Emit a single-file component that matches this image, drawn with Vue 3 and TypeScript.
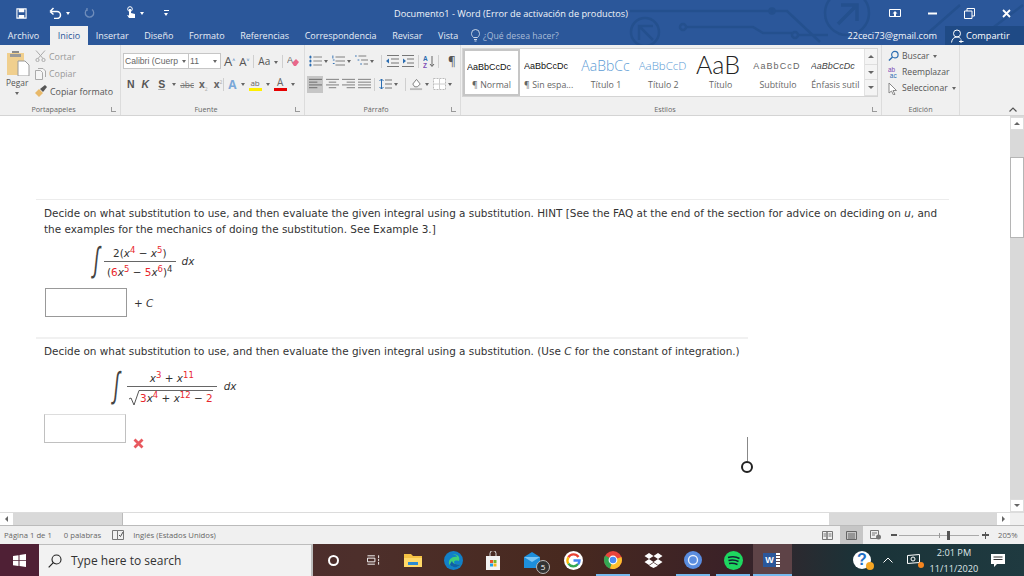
<script setup lang="ts">
const tabs = ["Insertar", "Diseño", "Formato", "Referencias", "Correspondencia", "Revisar", "Vista"];

const styles = [
  { name: "¶ Sin espa...", sample: "AaBbCcDc", cls: "s-nospace" },
  { name: "Título 1", sample: "AaBbCc", cls: "s-h1" },
  { name: "Título 2", sample: "AaBbCcD", cls: "s-h2" },
  { name: "Título", sample: "AaB", cls: "s-title" },
  { name: "Subtítulo", sample: "AaBbCcD", cls: "s-sub" },
  { name: "Énfasis sutil", sample: "AaBbCcDc", cls: "s-emph" },
];
</script>

<template>
  <div class="word">
    <!-- title bar -->
    <header class="titlebar">
      <svg class="circuit" width="404" height="45" viewBox="0 0 404 45">
        <g fill="none" stroke="#24508e" stroke-width="2.500">
          <circle cx="25" cy="32" r="14" />
          <path d="M19 40V26h14M19 26l14 14" />
          <circle cx="227" cy="13" r="22" />
          <path d="M218 24l18-18M221 5h16v16" stroke-width="3.500" />
          <path d="M10 11h157l33 31M66 27h67l10 6h29M178 35h30M300 40l40-35M350 45L403 5" />
          <circle cx="152" cy="11" r="2.500" />
          <circle cx="63" cy="27" r="3" />
          <circle cx="175" cy="35" r="3" />
        </g>
      </svg>
      <div class="qat">
        <svg class="q-save" width="11" height="11" viewBox="0 0 12 12"><path d="M1 1h10v10H1z" fill="none" stroke="#fff" stroke-width="1.200" /><path d="M3 1h6v3.500H3zM3 7.500h6V11H3z" fill="#fff" /></svg>
        <svg class="q-undo" width="13" height="12" viewBox="0 0 13 12"><path d="M1 4.500h7a3.500 3.500 0 0 1 0 7H5M1 4.500l3.500-3.500M1 4.500l3.500 3" fill="none" stroke="#fff" stroke-width="1.500" /></svg>
        <span class="caret"></span>
        <svg class="q-redo" width="11" height="12" viewBox="0 0 11 12"><path d="M3 2.500a4.200 4.200 0 1 0 5 0M3 1v3" fill="none" stroke="#6f8dbb" stroke-width="1.300" /></svg>
        <svg class="q-touch" width="10" height="14" viewBox="0 0 10 14"><circle cx="4" cy="3" r="2.300" fill="none" stroke="#fff" /><path d="M3 3h2v4l4 1v4H3L1 9l2 .5z" fill="#fff" /></svg>
        <span class="caret"></span>
        <span class="q-more"></span>
      </div>
      <div class="doc-title">Documento1 - Word (Error de activación de productos)</div>
      <div class="window-btns">
        <svg width="12" height="9" viewBox="0 0 12 9"><path d="M.5.500h11v7H.500z" fill="none" stroke="#fff" /><path d="M6 2l2.500 2.500h-1.500V7H5V4.500H3.500z" fill="#fff" /></svg>
        <svg width="9" height="3" viewBox="0 0 9 3"><path d="M0 1.500h9" stroke="#fff" stroke-width="2" /></svg>
        <svg width="11" height="11" viewBox="0 0 11 11"><path d="M.5 3h7.500v7.500H.5zM3 3V.5h7.500V8H8" fill="none" stroke="#fff" /></svg>
        <svg width="9" height="9" viewBox="0 0 9 9"><path d="M1 1l7 7M8 1L1 8" stroke="#fff" stroke-width="1.800" /></svg>
      </div>
    </header>

    <!-- tab row -->
    <nav class="tabrow">
      <span class="tab first">Archivo</span>
      <span class="tab active">Inicio</span>
      <span v-for="t in tabs" :key="t" class="tab">{{ t }}</span>
      <span class="tell">
        <svg width="9" height="13" viewBox="0 0 9 13"><path d="M2.500 8.500C1 7 .5 6 .5 4.500a4 4 0 0 1 8 0c0 1.500-.5 2.500-2 4zM3 10.500h3M3.500 12h2" fill="none" stroke="#c8d4e6" /></svg>
        ¿Qué desea hacer?
      </span>
      <span class="account">22ceci73@gmail.com</span>
      <span class="share">
        <svg width="14" height="14" viewBox="0 0 14 14"><circle cx="6" cy="4.500" r="3.500" fill="none" stroke="#fff" /><path d="M.5 13.500c.5-3.500 2.500-5.500 5.500-5.500 1.500 0 2.500.5 3.500 1.500M10 10.500v3.500M8 12.500h4.500" fill="none" stroke="#fff" /></svg>
        Compartir
      </span>
    </nav>

    <!-- ribbon -->
    <section class="ribbon">
      <div class="group g-clip">
        <div class="group-body clip-body">
          <div class="paste">
            <svg width="24" height="26" viewBox="0 0 24 26">
              <rect x="1" y="3" width="17" height="22" fill="#f0cf8e" />
              <path d="M6 3h7V1H6z" fill="#8a8a8a" />
              <path d="M4 4h11v3H4z" fill="#9a9a9a" />
              <path d="M12 11h7l4 4v11H12z" fill="#fff" stroke="#9a9a9a" />
            </svg>
            <span>Pegar</span>
            <span class="caret dark"></span>
          </div>
          <div class="clip-list">
            <span class="muted">
              <svg width="11" height="12" viewBox="0 0 11 12"><path d="M1 .5l7 8M10 .5l-7 8" stroke="#aaa" fill="none" /><circle cx="2.500" cy="10" r="1.600" fill="none" stroke="#aaa" /><circle cx="8.500" cy="10" r="1.600" fill="none" stroke="#aaa" /></svg>
              Cortar
            </span>
            <span class="muted">
              <svg width="11" height="12" viewBox="0 0 11 12"><path d="M.5 2.500h5l2 2v7h-7zM3 .5h5l2.500 2.500v6" fill="#f5f5f5" stroke="#aaa" /></svg>
              Copiar
            </span>
            <span>
              <svg width="12" height="12" viewBox="0 0 12 12"><path d="M0 8l4-4 4 4-4 4z" fill="#e8b96a" /><path d="M5 4l5-4 2 2-4 5z" fill="#555" /></svg>
              Copiar formato
            </span>
          </div>
        </div>
        <div class="group-label">Portapapeles<i class="launch"></i></div>
      </div>

      <div class="group g-font">
        <div class="group-body font-body">
          <div class="font-row">
            <span class="combo c-name">Calibri (Cuerp<span class="caret dark"></span></span>
            <span class="combo c-size">11<span class="caret dark"></span></span>
            <span class="big-a">A<sup>˄</sup></span>
            <span class="mid-a">A<sup>˅</sup></span>
            <i class="vsep"></i>
            <span class="aa">Aa<span class="caret dark"></span></span>
            <i class="vsep"></i>
            <svg width="12" height="12" viewBox="0 0 12 12"><text x="0" y="8" font-size="9" font-family="Liberation Sans" fill="#666">A</text><path d="M5 8l4-4 3 3-3 4H7z" fill="#e8688a" /></svg>
          </div>
          <div class="font-row r2">
            <b class="fmt">N</b>
            <b class="fmt it">K</b>
            <b class="fmt und">S</b>
            <span class="caret dark"></span>
            <span class="strike">abc</span>
            <span class="sub">x<sub>2</sub></span>
            <span class="sub sub2">x<sup>2</sup></span>
            <i class="vsep"></i>
            <span class="effect">A</span>
            <span class="caret dark"></span>
            <span class="hl">ab</span>
            <span class="caret dark"></span>
            <span class="fcol">A</span>
            <span class="caret dark"></span>
          </div>
        </div>
        <div class="group-label">Fuente<i class="launch"></i></div>
      </div>

      <div class="group g-para">
        <div class="group-body para-body">
          <div class="para-row">
            <svg width="13" height="12" viewBox="0 0 18 12" preserveAspectRatio="none"><g fill="#2b6cb0"><circle cx="2" cy="2" r="1.500" /><circle cx="2" cy="6" r="1.500" /><circle cx="2" cy="10" r="1.500" /></g><path d="M6 2h12M6 6h12M6 10h12" stroke="#777" /></svg><span class="caret dark"></span>
            <svg width="13" height="12" viewBox="0 0 15 12" preserveAspectRatio="none"><path d="M1 .5v3M1 5h2M1 8.500h2" stroke="#2b6cb0" /><path d="M4 2h11M4 6h11M4 10h11" stroke="#777" /></svg><span class="caret dark"></span>
            <svg width="13" height="12" viewBox="0 0 15 12" preserveAspectRatio="none"><path d="M0 1h2M3 5h2M6 9h2" stroke="#2b6cb0" /><path d="M4 1h9M7 5h8M10 9h5" stroke="#777" /></svg><span class="caret dark"></span>
            <i class="vsep"></i>
            <svg width="13" height="12" viewBox="0 0 13 12"><path d="M0 6l3-2.500v5z" fill="#2b6cb0" /><path d="M1 .5h12M5 4h8M5 8h8M1 11.500h12" stroke="#777" /></svg>
            <svg class="gap3" width="13" height="12" viewBox="0 0 13 12"><path d="M4 6L1 3.500v5z" fill="#2b6cb0" /><path d="M0 .5h12M5 4h7M5 8h7M0 11.500h12" stroke="#777" /></svg>
            <i class="vsep"></i>
            <svg width="12" height="13" viewBox="0 0 12 13"><text x="0" y="6" font-size="6.500" font-family="Liberation Sans" font-weight="700" fill="#2b6cb0">A</text><text x="0" y="13" font-size="6.500" font-family="Liberation Sans" font-weight="700" fill="#7d4cb5">Z</text><path d="M9 1v10M7 9l2 2.500L11 9" fill="none" stroke="#666" /></svg>
            <i class="vsep"></i>
            <span class="pilcrow">¶</span>
          </div>
          <div class="para-row r2">
            <span class="align on"><svg width="13" height="12" viewBox="0 0 14 12"><path d="M0 1h14M0 4h9M0 7h14M0 10h9" stroke="#666" /></svg></span>
            <svg class="gap3" width="13" height="12" viewBox="0 0 14 12"><path d="M0 1h14M3 4h8M0 7h14M3 10h8" stroke="#777" /></svg>
            <svg class="gap3" width="13" height="12" viewBox="0 0 14 12"><path d="M0 1h14M5 4h9M0 7h14M5 10h9" stroke="#777" /></svg>
            <svg class="gap3" width="13" height="12" viewBox="0 0 14 12"><path d="M0 1h14M0 4h14M0 7h14M0 10h14" stroke="#777" /></svg>
            <i class="vsep"></i>
            <svg width="13" height="12" viewBox="0 0 13 12"><path d="M2.500 1v10M.5 3l2-2 2 2M.5 9l2 2 2-2" fill="none" stroke="#2b6cb0" /><path d="M6 2h7M6 6h7M6 10h7" stroke="#777" /></svg><span class="caret dark"></span>
            <i class="vsep"></i>
            <svg width="13" height="13" viewBox="0 0 14 13"><path d="M3 6l4-5 4 5-3 3H5z" fill="#fff" stroke="#777" /><path d="M0 11.500h13" stroke="#bbb" stroke-width="2" /></svg><span class="caret dark"></span>
            <svg width="13" height="12" viewBox="0 0 13 12"><path d="M.5.500h12v11H.5z" fill="#fff" stroke="#bbb" stroke-dasharray="2 1" /><path d="M6.500 .5v11M.5 6h12" stroke="#ccc" /></svg><span class="caret dark"></span>
          </div>
        </div>
        <div class="group-label">Párrafo<i class="launch"></i></div>
      </div>

      <div class="group g-styles">
        <div class="group-body">
          <div class="gallery">
            <div class="style selected">
              <div class="sample s-normal">AaBbCcDc</div>
              <div class="sname">¶ Normal</div>
            </div>
            <div v-for="s in styles" :key="s.name" class="style">
              <div class="sample" :class="s.cls">{{ s.sample }}</div>
              <div class="sname">{{ s.name }}</div>
            </div>
            <div class="gallery-arrows">
              <span><i class="tri up"></i></span>
              <span><i class="tri down"></i></span>
              <span><i class="tri down bar"></i></span>
            </div>
          </div>
        </div>
        <div class="group-label">Estilos<i class="launch"></i></div>
      </div>

      <div class="group g-edit">
        <div class="group-body edit-body">
          <span>
            <svg width="11" height="12" viewBox="0 0 12 12"><circle cx="7.500" cy="4.500" r="3.500" fill="none" stroke="#2b6cb0" stroke-width="1.300" /><path d="M5 7l-4 4" stroke="#2b6cb0" stroke-width="1.500" /></svg>
            Buscar<span class="caret dark wide"></span>
          </span>
          <span>
            <svg width="11" height="13" viewBox="0 0 12 13"><text x="0" y="6" font-size="7" font-family="Liberation Sans" fill="#7d4cb5">ab</text><text x="2" y="13" font-size="7" font-family="Liberation Sans" fill="#2b6cb0">ac</text></svg>
            Reemplazar
          </span>
          <span>
            <svg width="11" height="13" viewBox="0 0 11 13"><path d="M1 1v10l2.500-2 2 4 1.500-.7-2-3.800h3.500z" fill="#fff" stroke="#888" /></svg>
            Seleccionar<span class="caret dark"></span>
          </span>
        </div>
        <div class="group-label nolaunch">Edición</div>
      </div>
      <svg class="collapse" width="8" height="5" viewBox="0 0 8 5"><path d="M.5 4.500L4 1l3.500 3.500" fill="none" stroke="#555" stroke-width="1.200" /></svg>
    </section>

    <!-- document -->
    <main class="workspace">
      <div class="page">
        <article class="q q1">
          <p class="qtext">
            Decide on what substitution to use, and then evaluate the given integral using a substitution. HINT [See the FAQ at the end of the section for advice on deciding on <i>u</i>, and<br />the examples for the mechanics of doing the substitution. See Example 3.]
          </p>
          <div class="formula f1">
            <span class="integral">∫</span>
            <span class="frac">
              <span class="num">2(<i>x</i><sup class="red">4</sup> − <i>x</i><sup class="red">5</sup>)</span>
              <span class="den">(<span class="red">6</span><i>x</i><sup class="red">5</sup> − <span class="red">5</span><i>x</i><sup class="red">6</sup>)<sup>4</sup></span>
            </span>
            <i class="dx">dx</i>
          </div>
          <div class="answer">
            <span class="box dark-box"></span>
            <span class="plus">+ <i>C</i></span>
          </div>
        </article>

        <article class="q q2">
          <p class="qtext">
            Decide on what substitution to use, and then evaluate the given integral using a substitution. (Use <i>C</i> for the constant of integration.)
          </p>
          <div class="formula f2">
            <span class="integral">∫</span>
            <span class="frac">
              <span class="num"><i>x</i><sup class="red">3</sup> + <i>x</i><sup class="red">11</sup></span>
              <span class="den root">
                <svg class="radical" width="12" height="16" viewBox="0 0 12 16"><path d="M1 9l2-1 3 7L11 .5h1" fill="none" stroke="#555" /></svg>
                <span class="radicand"><span class="red">3</span><i>x</i><sup class="red">4</sup> + <i>x</i><sup class="red">12</sup> − <span class="red">2</span></span>
              </span>
            </span>
            <i class="dx">dx</i>
          </div>
          <div class="answer a2">
            <span class="box light-box"></span>
            <svg class="wrong" width="11" height="11" viewBox="0 0 11 11"><path d="M1.500 1.500l8 8M9.500 1.500l-8 8" stroke="#e8595f" stroke-width="2.800" /></svg>
          </div>
          <div class="cursor-mark">
            <i class="cursor-line"></i>
            <i class="cursor-dot"></i>
          </div>
        </article>
      </div>
      <aside class="vscroll">
        <span class="sbtn"><i class="tri up"></i></span>
        <span class="vgap"></span>
        <span class="vthumb"></span>
        <span class="vtrack"></span>
        <span class="sbtn low"><i class="tri down"></i></span>
      </aside>
    </main>

    <div class="hscroll">
      <span class="hbtn"><i class="tri left"></i></span>
      <span class="hthumb-l"></span>
      <span class="htrack"></span>
      <span class="hthumb-r"></span>
      <span class="hbtn"><i class="tri right"></i></span>
      <span class="hcorner"></span>
    </div>

    <!-- status bar -->
    <footer class="status">
      <span>Página 1 de 1</span>
      <span class="st-words">0 palabras</span>
      <svg width="12" height="10" viewBox="0 0 12 10"><path d="M.5.500h5v9h-5zM5.500.5h6v9h-6z" fill="none" stroke="#777" /><path d="M7 5l1.500 1.500L11 2" fill="none" stroke="#555" /></svg>
      <span class="st-lang">Inglés (Estados Unidos)</span>
      <span class="st-right">
        <svg width="11" height="9" viewBox="0 0 11 9"><path d="M.5.500h4.500v8H.5zM5 .5h5.500v8H5zM1.500 3h2.500M1.500 5h2.500M6.500 3h3M6.500 5h3" fill="none" stroke="#777" /></svg>
        <span class="view-on"><svg width="11" height="9" viewBox="0 0 11 9"><path d="M.5.500h10v8H.5zM2 3h7M2 5h7M2 7h7" fill="none" stroke="#666" /></svg></span>
        <svg class="v-web" width="12" height="10" viewBox="0 0 12 10"><path d="M.5.500h8v8H.5zM2 3h5M2 5h3" fill="none" stroke="#777" /><circle cx="8.500" cy="7" r="2.500" fill="#777" /></svg>
        <span class="zoom">
          <i class="z-minus"></i>
          <span class="z-track"><i class="z-tick"></i><i class="z-thumb"></i></span>
          <i class="z-plus"></i>
        </span>
        <span class="z-pct">205%</span>
      </span>
    </footer>

    <!-- taskbar -->
    <footer class="taskbar">
      <span class="start">
        <svg width="13" height="13" viewBox="0 0 13 13"><path d="M0 2l5.500-.8v5H0zM6.500 1L13 0v6.200H6.500zM0 7h5.500v5L0 11.200zM6.500 7H13v6l-6.500-1z" fill="#fff" /></svg>
      </span>
      <span class="searchbox">
        <svg width="14" height="14" viewBox="0 0 14 14"><circle cx="8.500" cy="5.500" r="4.500" fill="none" stroke="#222" stroke-width="1.100" /><path d="M5.300 8.700L.7 13.300" stroke="#222" stroke-width="1.200" /></svg>
        Type here to search
      </span>
      <span class="tb-app cortana"><i></i></span>
      <span class="tb-app">
        <svg width="13" height="12" viewBox="0 0 14 12"><path d="M.5 1.500h8M.5 10.500h8M.5 4h8v4H.5zM12.500 1v3M12.500 5v2M12.500 8v3" fill="none" stroke="#fff" /></svg>
      </span>
      <span class="tb-app">
        <svg width="18" height="14" viewBox="0 0 18 14"><path d="M0 1h7l2 2h9v11H0z" fill="#f5c244" /><path d="M0 5h18v9H0z" fill="#ffd968" /><path d="M4 9h10v3H4z" fill="#2a8bd2" /></svg>
      </span>
      <span class="tb-app">
        <svg width="19" height="19" viewBox="0 0 19 19"><circle cx="9.500" cy="9.500" r="9.500" fill="#1280c8" /><path d="M5 13c3 4 9 4 12 0-2 1-7 1-7-2 0-1 2-2 5-1 2-5-4-8-8-6 3-1 6 0 6 2-4-1-9 2-8 7z" fill="#3fd07a" /><path d="M6 14c3 3 8 3 11-1-2 1-8 1-9-3-1 1-2 3-2 4z" fill="#0f5fa8" /></svg>
      </span>
      <span class="tb-app">
        <svg width="16" height="19" viewBox="0 0 16 19"><path d="M5 5V2.500a3 3 0 0 1 6 0V5" fill="none" stroke="#ddd" /><path d="M1 5h14v14H1z" fill="#f3f3f3" /><path d="M5 9h3v3H5z" fill="#e8552d" /><path d="M8.500 9h3v3h-3z" fill="#77b82a" /><path d="M5 12.500h3v3H5z" fill="#1da1e4" /><path d="M8.500 12.500h3v3h-3z" fill="#f5b81c" /></svg>
      </span>
      <span class="tb-app">
        <svg width="20" height="17" viewBox="0 0 20 17"><path d="M1 5l8-5 8 5v11H1z" fill="#1d8fdc" /><path d="M1 5h16L9 10z" fill="#7cc6f5" /></svg>
        <span class="badge">5</span>
      </span>
      <span class="tb-app">
        <svg width="19" height="19" viewBox="0 0 19 19"><circle cx="9.500" cy="9.500" r="9.500" fill="#fff" /><path d="M14.500 6A6 6 0 0 0 4.400 6.300" fill="none" stroke="#ea4335" stroke-width="2.400" /><path d="M4.400 6.300a6 6 0 0 0 0 6.300" fill="none" stroke="#fbbc05" stroke-width="2.400" /><path d="M4.400 12.600a6 6 0 0 0 9.700.5" fill="none" stroke="#34a853" stroke-width="2.400" /><path d="M9.500 9.500h6a6 6 0 0 1-1.400 3.800" fill="none" stroke="#4285f4" stroke-width="2.400" /></svg>
      </span>
      <span class="tb-app run">
        <svg width="18" height="18" viewBox="0 0 18 18"><circle cx="9" cy="9" r="9" fill="#e8453c" /><path d="M9 9L1.200 4.500A9 9 0 0 0 6 17.500z" fill="#34a853" /><path d="M9 9l8.400-3A9 9 0 0 1 6 17.500z" fill="#fbc02d" /><circle cx="9" cy="9" r="4.400" fill="#fff" /><circle cx="9" cy="9" r="3.300" fill="#4a8af4" /></svg>
      </span>
      <span class="tb-app">
        <svg width="19" height="15" viewBox="0 0 19 15"><path d="M5 0l4.500 3L5 6 .5 3zM14 0l4.500 3L14 6 9.500 3zM5 6l4.500 3L5 12 .5 9zM14 6l4.500 3L14 12 9.500 9zM5 12.800l4.500-3 4.500 3-4.500 2.200z" fill="#fff" /></svg>
      </span>
      <span class="tb-app run">
        <svg width="18" height="18" viewBox="0 0 18 18"><circle cx="9" cy="9" r="9" fill="#5a8de0" /><circle cx="9" cy="9" r="4.500" fill="none" stroke="#e6eefb" stroke-width="1.400" /></svg>
      </span>
      <span class="tb-app run">
        <svg width="19" height="19" viewBox="0 0 19 19"><circle cx="9.500" cy="9.500" r="9.500" fill="#1ed760" /><path d="M4 6.500c4-1 8-1 11.500 1M4.500 9.500c3.500-.8 7-.6 10 1M5 12.500c3-.6 5.500-.4 8.500 1" fill="none" stroke="#123" stroke-width="1.500" /></svg>
      </span>
      <span class="tb-app run word-app">
        <span class="w-doc"></span>
        <span class="w-letter">W</span>
      </span>
      <span class="tray">
        <span class="help">?<i></i></span>
        <svg class="chev" width="10" height="6" viewBox="0 0 10 6"><path d="M.5 5.500L5 1l4.500 4.500" fill="none" stroke="#fff" /></svg>
        <span class="tray-mon">
          <svg width="15" height="12" viewBox="0 0 13 12"><path d="M.5 1.500l12-1v8l-12 1z" fill="none" stroke="#fff" /><circle cx="6" cy="5" r="2" fill="none" stroke="#fff" /></svg>
          <i></i>
        </span>
        <span class="clock"><span>2:01 PM</span><span>11/11/2020</span></span>
        <svg class="notif" width="14" height="13" viewBox="0 0 14 13"><path d="M0 0h14v10H6l-3 3v-3H0z" fill="#fff" /><path d="M2.500 3h9M2.500 5.500h9" stroke="#333" /></svg>
      </span>
    </footer>
  </div>
</template>

<style scoped>
.word {
  width: 1024px;
  height: 576px;
  display: flex;
  flex-direction: column;
  overflow: hidden;
  font-family: "Open Sans", "Liberation Sans", sans-serif;
  color: #444;
  background: #fff;
}

/* title bar */
.titlebar {
  position: relative;
  height: 26px;
  flex: none;
  background: #2b579a;
  display: flex;
  align-items: center;
  color: #fff;
}
.circuit {
  position: absolute;
  left: 620px;
  top: 0;
  z-index: 2;
  pointer-events: none;
}
.qat {
  position: relative;
  z-index: 3;
  width: 250px;
  display: flex;
  align-items: center;
}
.q-save { margin-left: 16px; }
.q-undo { margin-left: 22px; }
.q-redo { margin-left: 14px; }
.q-touch { margin-left: 31px; }
.caret {
  display: inline-block;
  width: 0;
  height: 0;
  margin-left: 4px;
  border-left: 2.5px solid transparent;
  border-right: 2.5px solid transparent;
  border-top: 3px solid #fff;
  vertical-align: middle;
}
.caret.dark { border-top-color: #666; }
.caret.wide { margin-left: 6px; }
.q-more {
  margin-left: 20px;
  width: 5px;
  height: 5px;
  border-top: 1px solid #fff;
  position: relative;
}
.q-more::after {
  content: "";
  position: absolute;
  top: 2px;
  left: 0;
  border-left: 2.5px solid transparent;
  border-right: 2.5px solid transparent;
  border-top: 3px solid #fff;
}
.doc-title {
  position: relative;
  z-index: 3;
  margin-left: 144px;
  font-size: 9.2px;
  white-space: nowrap;
  color: #f1f4f9;
}
.window-btns {
  position: absolute;
  z-index: 3;
  left: 889px;
  top: 0;
  width: 122px;
  height: 26px;
  display: flex;
  align-items: center;
  justify-content: space-between;
}

/* tabs */
.tabrow {
  position: relative;
  height: 19px;
  flex: none;
  background: #2b579a;
  display: flex;
  align-items: stretch;
  font-size: 9px;
  color: #e8edf5;
}
.tab {
  position: relative;
  z-index: 3;
  display: flex;
  align-items: center;
  padding: 0 7.8px;
}
.tab.first { margin-right: 3px; }
.tab.active {
  background: #f0f0f0;
  color: #2b579a;
}
.tell {
  position: relative;
  z-index: 3;
  display: flex;
  align-items: center;
  gap: 3px;
  margin-left: 5px;
  font-size: 8.700px;
  color: #a9bcd8;
}
.account {
  position: relative;
  z-index: 3;
  margin-left: auto;
  display: flex;
  align-items: center;
  margin-right: 8px;
  font-size: 9.2px;
  color: #f3f5f9;
}
.share {
  position: relative;
  z-index: 3;
  width: 79px;
  display: flex;
  align-items: center;
  gap: 1px;
  padding-left: 6px;
  box-sizing: border-box;
  background: #1f4a85;
  color: #fff;
  font-size: 9.200px;
}

/* ribbon */
.ribbon {
  position: relative;
  height: 71px;
  flex: none;
  display: flex;
  box-sizing: border-box;
  background: #f0f0f0;
  border-bottom: 1px solid #d4d4d4;
  font-size: 8.9px;
}
.group {
  display: flex;
  flex-direction: column;
  border-right: 1px solid #dcdcdc;
  box-sizing: border-box;
}
.group-body { flex: 1; min-height: 0; }
.group-label {
  position: relative;
  height: 12px;
  padding-right: 13px;
  font-size: 7.2px;
  line-height: 12px;
  text-align: center;
  color: #666;
}
.group-label.nolaunch { padding-right: 0; }
.launch {
  position: absolute;
  right: 4px;
  top: 4px;
  width: 4px;
  height: 4px;
  border-left: 1px solid #999;
  border-bottom: 1px solid #999;
}
.g-clip { width: 121px; }
.g-font { width: 184px; }
.g-para { width: 156px; }
.g-styles { width: 421px; padding-left: 1px; }
.g-edit { width: 78px; }
.clip-body { display: flex; }
.paste {
  width: 35px;
  padding-left: 6px;
  padding-top: 5px;
  box-sizing: border-box;
  display: flex;
  flex-direction: column;
  align-items: flex-start;
  color: #555;
  font-size: 8.4px;
}
.paste span:nth-child(2) { margin-top: 1px; }
.paste .caret { margin-left: 9px; margin-top: 4px; }
.clip-list {
  display: flex;
  flex-direction: column;
  padding-top: 5px;
  gap: 5.5px;
  color: #555;
  white-space: nowrap;
}
.clip-list span {
  display: flex;
  align-items: center;
  gap: 3px;
  height: 12px;
}
.clip-list .muted { color: #999; }
.font-body { padding: 8px 0 0 2px; }
.font-row {
  display: flex;
  align-items: center;
  height: 16px;
}
.font-row.r2 { margin-top: 7px; padding-left: 4px; }
.r2 .vsep { margin: 0 3px 0 1px; }
.combo {
  box-sizing: border-box;
  height: 16px;
  display: flex;
  align-items: center;
  justify-content: space-between;
  background: #fff;
  border: 1px solid #c6c6c6;
  padding: 0 3px 0 1px;
  font-family: "Liberation Sans", sans-serif;
  font-size: 8.6px;
  color: #666;
  white-space: nowrap;
}
.c-name { width: 66px; }
.c-size { width: 33px; margin-left: -1px; }
.big-a { margin-left: 3px; font-size: 13px; color: #555; }
.mid-a { margin-left: 4px; font-size: 11.5px; color: #555; }
.big-a sup, .mid-a sup { font-size: 5px; color: #2b6cb0; }
.vsep {
  display: inline-block;
  flex: none;
  width: 1px;
  height: 13px;
  margin: 0 4px;
  background: #cfcfcf;
}
.aa { font-size: 10px; color: #555; }
.fmt {
  font-family: "Liberation Sans", sans-serif;
  font-size: 10.5px;
  color: #555;
  margin-right: 7px;
}
.fmt.it { font-style: italic; margin-right: 9px; }
.fmt.und { margin-right: 3px; text-decoration: underline; text-decoration-color: #aaa; }
.strike { margin-left: 4px; font-size: 8.4px; color: #777; text-decoration: line-through; }
.sub { margin-left: 5px; font-size: 10px; font-weight: 700; color: #666; }
.sub2 { margin-left: 6px; }
.sub sub, .sub sup { font-size: 5px; color: #aaa; font-weight: 400; }
.effect { margin-left: 1px; font-size: 12px; color: #7aa7d8; font-weight: 700; }
.hl, .fcol {
  margin-left: 4px;
  width: 13px;
  text-align: center;
  font-size: 8px;
  line-height: 11px;
  color: #666;
}
.hl { border-bottom: 3px solid #ffef00; }
.fcol { font-size: 10px; border-bottom: 3px solid #e60000; }
.para-body { padding: 9px 0 0 4px; }
.para-row {
  display: flex;
  align-items: center;
  height: 14px;
}
.para-row .caret { margin: 0 4px 0 2px; }
.para-row .vsep { margin: 0 4px 0 3px; }
.para-row .gap3 { margin-left: 3px; }
.para-row.r2 { margin-top: 9px; }
.pilcrow { font-size: 12px; color: #555; margin-left: 5px; }
.align { display: flex; align-items: center; justify-content: center; width: 16px; height: 17px; margin-left: -2px; }
.align.on { background: #c6c6c6; }
.gallery {
  margin-top: 3px;
  height: 49px;
  display: flex;
  background: #fff;
  box-sizing: border-box;
  border: 1px solid #d4d4d4;
  width: 416px;
}
.style {
  flex: 1;
  min-width: 0;
  overflow: hidden;
  text-align: center;
  white-space: nowrap;
  box-sizing: border-box;
  font-family: "Liberation Sans", sans-serif;
}
.style.selected {
  flex: none;
  width: 57px;
  border: 2px solid #c6c6c6;
}
.sample {
  height: 30px;
  line-height: 34px;
  margin: 0 4px;
  font-size: 9px;
  text-align: left;
  font-family: "Liberation Sans", sans-serif;
  color: #111;
  overflow: hidden;
}
.selected .sample { height: 28px; line-height: 32px; margin: 0 2px; }
.sname { font-size: 8.8px; line-height: 13px; color: #666; font-family: "Open Sans", sans-serif; }
.s-nospace { font-size: 9px; }
.s-h1 { font-size: 14px; color: #5b9bd5; font-family: "Open Sans", sans-serif; font-weight: 300; }
.s-h2 { font-size: 11.5px; color: #5b9bd5; font-family: "Open Sans", sans-serif; font-weight: 300; }
.s-title { font-size: 25px; color: #222; font-family: "Lato", sans-serif; font-weight: 300; line-height: 30px; }
.s-sub { font-size: 9px; letter-spacing: 1.100px; color: #666; }
.s-emph { font-size: 9px; font-style: italic; color: #444; }
.gallery-arrows {
  width: 12px;
  flex: none;
  display: flex;
  flex-direction: column;
  border-left: 1px solid #e2e2e2;
  background: #f4f4f4;
}
.gallery-arrows span {
  flex: 1;
  display: flex;
  align-items: center;
  justify-content: center;
  border-bottom: 1px solid #dedede;
}
.tri {
  display: block;
  width: 0;
  height: 0;
  border-style: solid;
  border-color: transparent;
}
.tri.up { border-width: 0 3px 3px; border-bottom-color: #666; }
.tri.down { border-width: 3px 3px 0; border-top-color: #666; }
.tri.left { border-width: 3px 3px 3px 0; border-right-color: #666; }
.tri.right { border-width: 3px 0 3px 3px; border-left-color: #666; }
.edit-body {
  display: flex;
  flex-direction: column;
  padding: 5px 0 0 6px;
  gap: 4px;
  font-size: 8.6px;
  color: #555;
  white-space: nowrap;
}
.edit-body > span { display: flex; align-items: center; gap: 3px; height: 12px; }
.edit-body .caret { margin-left: 1px; }
.collapse { position: absolute; right: 7px; top: 62px; }

/* document */
.workspace {
  flex: 1;
  min-height: 0;
  display: flex;
  background: #fff;
}
.page { flex: 1; min-width: 0; padding: 83px 0 0 36px; box-sizing: border-box; }
.q { position: relative; color: #333; font-family: "DejaVu Sans", Verdana, sans-serif; font-size: 10.45px; }
.q1 {
  width: 913px;
  height: 138px;
  box-sizing: border-box;
  border-top: 1px solid #ececec;
  padding: 5px 8px 0;
}
.q2 {
  width: 712px;
  box-sizing: border-box;
  border-top: 2px solid #f1f1f1;
  padding: 4px 8px 0;
}
.qtext { margin: 0; line-height: 16px; color: #333; white-space: nowrap; }
.formula {
  display: flex;
  align-items: center;
  font-family: "DejaVu Sans", Verdana, sans-serif;
}
.f1 { margin: 6px 0 0 46px; height: 36px; }
.f2 { margin: 9px 0 0 66px; height: 36px; }
.integral {
  font-family: "Liberation Sans", sans-serif;
  font-size: 17px;
  line-height: 36px;
  font-weight: 400;
  text-align: center;
  transform: skewX(-6deg) scale(1.1, 2.1);
  color: #444;
  width: 13px;
  margin-right: 1px;
}
.f2 .integral { margin-right: 4px; }
.frac {
  display: inline-flex;
  flex-direction: column;
  align-items: center;
  text-align: center;
  margin-top: 2px;
}
.num { padding: 2px 1px 0; line-height: 15px; white-space: nowrap; }
.den {
  border-top: 1px solid #666;
  padding: 3px 3px 0;
  line-height: 15px;
  white-space: nowrap;
}
sup { font-size: 8.5px; line-height: 0; vertical-align: 4px; }
.red { color: #e8262d; }
.dx { margin-left: 6px; }
.f2 .dx { margin-left: 7px; }
.root {
  display: flex;
  align-items: flex-end;
  padding: 3px 4px 0 1px;
}
.radicand { border-top: 1px solid #666; line-height: 15px; }
.answer { display: flex; align-items: center; margin-top: 9px; }
.box {
  width: 82px;
  height: 29px;
  box-sizing: border-box;
  background: #fff;
  margin-left: 1px;
}
.dark-box { border: 1px solid #999; }
.light-box { border: 1px solid #c0c0c0; border-top-color: #ddd; margin-left: 0; }
.plus { margin-left: 7px; }
.a2 { margin-top: 10px; align-items: flex-start; }
.wrong { margin: 24px 0 0 7px; }
.cursor-mark {
  position: absolute;
  left: 705px;
  top: 98px;
  display: flex;
  flex-direction: column;
  align-items: center;
}
.cursor-line { width: 1px; height: 24px; background: #888; }
.cursor-dot {
  width: 12px;
  height: 12px;
  box-sizing: border-box;
  border: 2px solid #222;
  border-radius: 50%;
  background: #fff;
}
.vscroll {
  width: 14px;
  flex: none;
  display: flex;
  flex-direction: column;
  padding-top: 1px;
  box-sizing: border-box;
  background: #d9d9d9;
}
.sbtn {
  height: 13px;
  flex: none;
  box-sizing: border-box;
  display: flex;
  align-items: center;
  justify-content: center;
  background: #fff;
  border: 1px solid #ddd;
}
.vgap { height: 27px; flex: none; }
.vthumb { height: 81px; flex: none; box-sizing: border-box; background: #fff; border: 1px solid #b5b5b5; }
.vtrack { flex: 1; }
.hscroll {
  height: 14px;
  flex: none;
  box-sizing: border-box;
  display: flex;
  background: #fff;
  border-top: 1px solid #dcdcdc;
  border-bottom: 1px solid #bbb;
}
.hbtn {
  width: 13px;
  flex: none;
  display: flex;
  align-items: center;
  justify-content: center;
  background: #fff;
}
.hthumb-l { width: 109px; flex: none; background: #d9d9d9; border-right: 1px solid #bbb; }
.htrack { flex: 1; }
.hthumb-r { width: 168px; flex: none; background: #d9d9d9; }
.hcorner { width: 14px; flex: none; background: #f0f0f0; }

/* status bar */
.status {
  height: 18px;
  flex: none;
  display: flex;
  align-items: center;
  padding-left: 4px;
  background: #f0f0f0;
  font-size: 7.700px;
  color: #666;
}
.st-words { margin-left: 12px; margin-right: 11px; }
.st-lang { margin-left: 9px; }
.st-right { margin-left: auto; display: flex; align-items: center; height: 100%; }
.view-on {
  width: 23px;
  height: 100%;
  margin-left: 7px;
  display: flex;
  align-items: center;
  justify-content: center;
  background: #c6c6c6;
}
.v-web { margin-left: 7px; }
.zoom { display: flex; align-items: center; margin-left: 9px; }
.z-minus { width: 6px; height: 1.5px; background: #555; }
.z-track { position: relative; width: 80px; height: 1px; margin: 0 3px 0 2px; background: #aaa; }
.z-tick { position: absolute; left: 40px; top: -2px; width: 1px; height: 5px; background: #999; }
.z-thumb { position: absolute; left: 48px; top: -4px; width: 3px; height: 9px; background: #555; }
.z-plus { position: relative; width: 7px; height: 1.5px; background: #555; }
.z-plus::after { content: ""; position: absolute; left: 2.750px; top: -2.750px; width: 1.500px; height: 7px; background: #555; }
.z-pct { margin-left: 9px; width: 26px; }

/* taskbar */
.taskbar {
  height: 32px;
  flex: none;
  display: flex;
  align-items: center;
  background: linear-gradient(90deg, #4a2530 0, #4d2f2b 35%, #48291f 55%, #3a2128 72%, #1a3338 84%, #1f3a40 100%);
  color: #fff;
}
.start { width: 39px; height: 100%; display: flex; align-items: center; justify-content: center; background: #4f2035; }
.searchbox {
  width: 274px;
  height: 100%;
  box-sizing: border-box;
  display: flex;
  align-items: center;
  gap: 9px;
  padding-left: 9px;
  background: #f2f2f2;
  border: 1px solid #bdbdbd;
  border-width: 1px 2px 0 0;
  color: #333;
  font-family: "Open Sans", sans-serif;
  font-size: 12px;
}
.tb-app {
  position: relative;
  width: 40px;
  height: 100%;
  box-sizing: border-box;
  flex: none;
  display: flex;
  align-items: center;
  justify-content: center;
}
.tb-app.run::after {
  content: "";
  position: absolute;
  left: 3px;
  right: 3px;
  bottom: 0;
  height: 2px;
  background: #76b9ed;
}
.cortana i {
  width: 11px;
  height: 11px;
  box-sizing: border-box;
  border: 2px solid #fff;
  border-radius: 50%;
}
.badge {
  position: absolute;
  left: 23px;
  top: 16px;
  width: 12px;
  height: 12px;
  border: 1px solid #bbb;
  border-radius: 50%;
  background: #333;
  font-size: 8px;
  line-height: 12px;
  text-align: center;
  color: #fff;
}
.word-app { background: #5e4347; width: 39px; }
.word-app.run::after { left: 0; right: 0; }
.w-doc {
  position: absolute;
  left: 16px;
  top: 9px;
  width: 11px;
  height: 15px;
  background: repeating-linear-gradient(180deg, #fff 0, #fff 2px, #5e4347 2px, #5e4347 3px);
}
.w-letter {
  position: relative;
  left: -3px;
  width: 13px;
  height: 14px;
  background: #2b579a;
  color: #fff;
  font-size: 9px;
  font-weight: 700;
  line-height: 14px;
  text-align: center;
  font-family: "Liberation Sans", sans-serif;
}
.tray { margin-left: auto; display: flex; align-items: center; height: 100%; }
.help {
  position: relative;
  width: 18px;
  height: 18px;
  border-radius: 50%;
  background: #fff;
  color: #1f6fc4;
  font-size: 16px;
  font-weight: 700;
  line-height: 18px;
  text-align: center;
  font-family: "Liberation Sans", sans-serif;
}
.help i {
  position: absolute;
  right: -3px;
  bottom: -1px;
  width: 8px;
  height: 8px;
  border-radius: 50%;
  background: #f5a623;
}
.chev { margin-left: 12px; }
.tray-mon { position: relative; margin-left: 13px; display: flex; width: 18px; }
.tray-mon i {
  position: absolute;
  right: 0;
  bottom: -2px;
  width: 6px;
  height: 6px;
  border-radius: 50%;
  background: #f5851f;
}
.clock {
  display: flex;
  flex-direction: column;
  align-items: center;
  width: 50px;
  margin-left: 5px;
  gap: 3px;
  font-size: 9.2px;
  color: #dfe6e8;
}
.notif { margin: 0 19px 0 12px; }
</style>

<style>
html, body { margin: 0; overflow: hidden; }
</style>
